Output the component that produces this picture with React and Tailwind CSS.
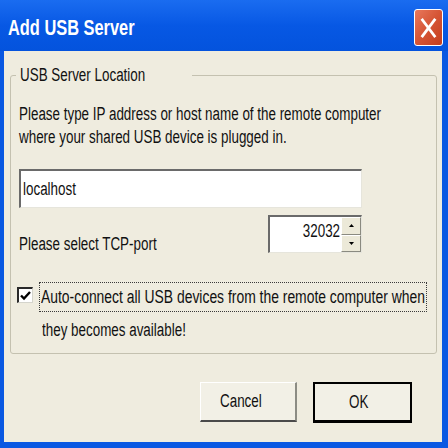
// XP-style "Add USB Server" dialog. The screenshot is squeezed sideways,
// so text runs are narrowed with scale-x.
function T({ children, className = "" }) {
  return (
    <span className={`inline-block whitespace-nowrap origin-left scale-x-[0.745] ${className}`}>{children}</span>
  );
}

export default function App() {
  return (
    <div className="w-[448px] h-[448px] overflow-hidden bg-[#0a58e2] flex flex-col font-['Liberation_Sans',Arial,sans-serif] text-[#111]">
      {/* Title bar */}
      <div className="h-[51px] flex items-start justify-between pl-[8px] pr-[5px] bg-gradient-to-b from-[#1a6cf0] via-[#0758e4] to-[#0453dd]">
        <span className="mt-[15px] text-white font-bold text-[22px] leading-[26px]">
          <T className="scale-x-[0.735]">Add USB Server</T>
        </span>
        <div className="mt-[9px] w-[29px] h-[37px] rounded-[3px] border border-white bg-gradient-to-br from-[#e8785c] via-[#d55434] to-[#c53d1d] flex items-center justify-center">
          <svg width="17" height="22" viewBox="0 0 17 22">
            <path d="M2.5 3 L14.5 19 M14.5 3 L2.5 19" stroke="white" strokeWidth="2.8" strokeLinecap="square" />
          </svg>
        </div>
      </div>

      {/* Client area */}
      <div className="flex-1 ml-[4px] mr-[6px] mb-[6px] bg-[#efecdf] flex flex-col overflow-hidden">
        {/* Group box */}
        <div className="relative mt-[24px] ml-[6px] w-[427px] h-[279px] border border-[#c4c1b0] rounded-[3px] pl-[8px]">
          <span className="absolute left-[5px] -top-[12px] bg-[#efecdf] px-[4px] text-[18px] leading-[22px]">
            <T>USB Server Location</T>
          </span>

          <div className="mt-[27px] text-[18px] leading-[23px]">
            <T>Please type IP address or host name of the remote computer</T>
            <br />
            <T>where your shared USB device is plugged in.</T>
          </div>

          <div className="mt-[20px] w-[343px] h-[39px] bg-white border-t-2 border-l-2 border-t-[#6a6a6a] border-l-[#6a6a6a] border-b border-r border-b-[#e6e5dc] border-r-[#e6e5dc] flex items-center pl-[2px] text-[18px] leading-[22px]">
            <T>localhost</T>
          </div>

          <div className="mt-[7px] w-[343px] flex items-start">
            <div className="flex-1 min-w-0 mt-[18px] text-[18px] leading-[23px]">
              <T>Please select TCP-port</T>
            </div>
            <div className="w-[94px] h-[38px] bg-white border-t-2 border-l-2 border-t-[#6a6a6a] border-l-[#6a6a6a] border-b border-r border-b-[#e6e5dc] border-r-[#e6e5dc] flex">
              <div className="flex-1 min-w-0 flex justify-end items-start pt-[3px] pr-[1px] text-[18px] leading-[22px]">
                <T className="origin-right">32032</T>
              </div>
              <div className="w-[20px] flex flex-col">
                <div className="flex-1 bg-[#ece9d8] border-t border-l border-t-white border-l-white border-b border-r border-b-[#8a8a80] border-r-[#8a8a80] flex items-center justify-center">
                  <svg width="5" height="3" viewBox="0 0 5 3"><path d="M2.5 0 L5 3 L0 3 Z" fill="black" /></svg>
                </div>
                <div className="flex-1 bg-[#ece9d8] border-t border-l border-t-white border-l-white border-b border-r border-b-[#8a8a80] border-r-[#8a8a80] flex items-center justify-center">
                  <svg width="5" height="3" viewBox="0 0 5 3"><path d="M0 0 L5 0 L2.5 3 Z" fill="black" /></svg>
                </div>
              </div>
            </div>
          </div>

          {/* Auto-connect checkbox */}
          <div className="mt-[26px] -ml-[2px] flex items-start">
            <div className="mt-[5px] w-[16px] h-[16px] bg-white border-t-2 border-l-2 border-t-[#2a2a2a] border-l-[#2a2a2a] border-b border-r border-b-[#d4d4cc] border-r-[#d4d4cc] flex items-center justify-center">
              <svg width="11" height="10" viewBox="0 0 11 10">
                <path d="M1 4.5 L4 7.5 L10 1" stroke="black" strokeWidth="2.4" fill="none" />
              </svg>
            </div>
            <div className="ml-[6px] flex flex-col">
              <div className="w-[388px] h-[30px] border border-dotted border-[#3a3a3a] overflow-hidden pl-[1px] text-[18px] leading-[28px]">
                <T className="scale-x-[0.772]">Auto-connect all USB devices from the remote computer when</T>
              </div>
              <div className="mt-[7px] pl-[3px] text-[18px] leading-[23px]">
                <T>they becomes available!</T>
              </div>
            </div>
          </div>
        </div>

        {/* Buttons */}
        <div className="mt-[28px] mr-[30px] flex justify-end gap-[16px]">
          <button className="w-[97px] h-[40px] bg-[#f2f0e6] border border-t-white border-l-white border-b-2 border-r-2 border-b-[#4a4a4a] border-r-[#8c8c84] flex items-center justify-center text-[18px]">
            <T className="origin-center">Cancel</T>
          </button>
          <button className="w-[99px] h-[41px] bg-[#f2f0e6] border-2 border-black border-b-[3px] flex items-center justify-center text-[18px]">
            <T className="origin-center">OK</T>
          </button>
        </div>
      </div>
    </div>
  );
}
